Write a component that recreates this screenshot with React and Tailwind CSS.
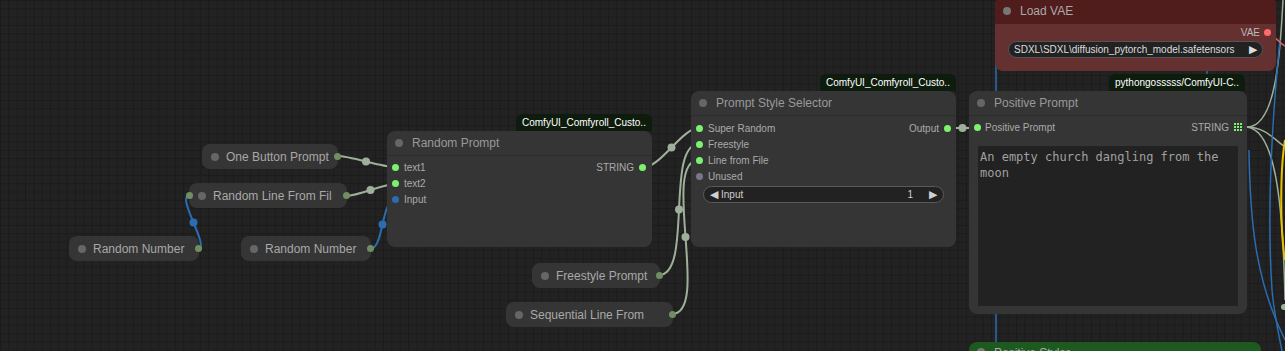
import React from "react";

const WIRE = "#9fb09a";
const BLUE = "#2a6db0";

function Dot({ className }) {
  return <span className={"inline-block rounded-full shrink-0 " + className} />;
}

function Collapsed({ className, label, inDot }) {
  return (
    <div className={"absolute h-[25px] rounded-lg bg-[#353535] flex items-center " + className}>
      {inDot && <Dot className="absolute left-[-3px] w-[7px] h-[7px] bg-[#6f8f63]" />}
      <Dot className="ml-[9px] w-[8px] h-[8px] bg-[#666]" />
      <span className="ml-[7px] text-[12px] text-[#a8a8a8] whitespace-nowrap">{label}</span>
      <Dot className="absolute right-[-3px] w-[7px] h-[7px] bg-[#6f8f63]" />
    </div>
  );
}

function Badge({ className, children }) {
  return (
    <div className={"absolute h-[17px] rounded-t-md bg-[#0e1c0e] text-white text-[10px] leading-[17px] px-[6px] whitespace-nowrap " + className}>
      {children}
    </div>
  );
}

function Title({ children }) {
  return (
    <div className="h-[25px] flex items-center border-b border-[#2c2c2c]">
      <Dot className="ml-[8px] w-[8px] h-[8px] bg-[#666]" />
      <span className="ml-[9px] text-[12px] text-[#999]">{children}</span>
    </div>
  );
}

function Slot({ label, color, right, rightDot }) {
  return (
    <div className="h-4 flex items-center text-[10px] text-[#aaa]">
      {label ? (
        <>
          <Dot className={"ml-[5px] w-[7px] h-[7px] " + color} />
          <span className="ml-[5px]">{label}</span>
        </>
      ) : null}
      {right && (
        <span className="ml-auto flex items-center">
          <span>{right}</span>
          <Dot className={"ml-[5px] mr-[5px] w-[7px] h-[7px] " + rightDot} />
        </span>
      )}
    </div>
  );
}

export default function App() {
  return (
    <div
      className="relative w-[1285px] h-[351px] overflow-hidden bg-[#222222] bg-[linear-gradient(to_right,#1b1b1b_1px,transparent_1px),linear-gradient(to_bottom,#1b1b1b_1px,transparent_1px)] bg-[size:8.33px_8.33px]"
      style={{ fontFamily: '"Liberation Sans", Arial, sans-serif' }}
    >
      <svg className="absolute inset-0" width="1285" height="351" fill="none">
        <path d="M996 60 L996 351" stroke={BLUE} strokeWidth="1.5" />
        <path d="M1207 60 L1207 100" stroke={BLUE} strokeWidth="1.5" />
        <path d="M337 156 C352 156 380 167 395 167" stroke={WIRE} strokeWidth="2" />
        <path d="M346 196 C359 196 383 184 395 184" stroke={WIRE} strokeWidth="2" />
        <path d="M198 249 C211 249 176 196 189 196" stroke={BLUE} strokeWidth="2" />
        <path d="M370 249 C384 249 381 200 395 200" stroke={BLUE} strokeWidth="2" />
        <path d="M644 167 C661 167 682 128 699 128" stroke={WIRE} strokeWidth="2" />
        <path d="M659 275 C693 275 665 144 699 144" stroke={WIRE} strokeWidth="2" />
        <path d="M672 314 C711 314 660 160 699 160" stroke={WIRE} strokeWidth="2" />
        <path d="M948 128 L977 128" stroke={WIRE} strokeWidth="2" />
        <path d="M1247 127 C1275 127 1280 60 1283 0" stroke={WIRE} strokeWidth="1.5" />
        <path d="M1247 127 C1265 127 1275 140 1285 147" stroke={WIRE} strokeWidth="1.5" />
        <path d="M1247 127 C1275 130 1283 200 1285 300" stroke={WIRE} strokeWidth="1.5" />
        <path d="M1280 40 C1274 100 1266 200 1272 290 C1275 320 1280 340 1282 351" stroke={BLUE} strokeWidth="1.5" />
        <path d="M1249 150 C1250 220 1255 280 1285 340" stroke={BLUE} strokeWidth="1.5" />
        <path d="M1285 140 C1280 170 1280 230 1285 260" stroke="#e8c000" strokeWidth="2" />
        <path d="M1268 35 C1275 35 1278 42 1285 46" stroke="#e06060" strokeWidth="1.5" />
        <circle cx="366" cy="161.5" r="4" fill={WIRE} />
        <circle cx="370.5" cy="190" r="4" fill={WIRE} />
        <circle cx="193.5" cy="222.5" r="4" fill={BLUE} />
        <circle cx="382.5" cy="224.5" r="4" fill={BLUE} />
        <circle cx="671.5" cy="147.5" r="4" fill={WIRE} />
        <circle cx="679" cy="209.5" r="4" fill={WIRE} />
        <circle cx="685.5" cy="237" r="4" fill={WIRE} />
        <circle cx="962.5" cy="128" r="4" fill={WIRE} />
        <circle cx="1284" cy="307" r="3" fill={WIRE} />
      </svg>

      <Collapsed className="left-[202px] top-[144px] w-[136px]" label="One Button Prompt" />
      <Collapsed className="left-[189px] top-[183px] w-[158px]" label="Random Line From Fil" inDot />
      <Collapsed className="left-[69px] top-[236px] w-[130px]" label="Random Number" />
      <Collapsed className="left-[241px] top-[236px] w-[130px]" label="Random Number" />
      <Collapsed className="left-[532px] top-[263px] w-[128px]" label="Freestyle Prompt" />
      <Collapsed className="left-[506px] top-[302px] w-[167px]" label="Sequential Line From" />

      <Badge className="left-[516px] top-[114px]">ComfyUI_Comfyroll_Custo..</Badge>
      <div className="absolute left-[387px] top-[131px] w-[265px] h-[116px] rounded-lg bg-[#353535]">
        <Title>Random Prompt</Title>
        <div className="pt-[3px] pr-[1px]">
          <Slot label="text1" color="bg-[#7cf26e]" right="STRING" rightDot="bg-[#7cf26e]" />
          <Slot label="text2" color="bg-[#7cf26e]" />
          <Slot label="Input" color="bg-[#2a6db0]" />
        </div>
      </div>

      <Badge className="left-[820px] top-[74px]">ComfyUI_Comfyroll_Custo..</Badge>
      <div className="absolute left-[691px] top-[91px] w-[265px] h-[156px] rounded-lg bg-[#353535]">
        <Title>Prompt Style Selector</Title>
        <div className="pt-[4px]">
          <Slot label="Super Random" color="bg-[#7cf26e]" right="Output" rightDot="bg-[#7cf26e]" />
          <Slot label="Freestyle" color="bg-[#7cf26e]" />
          <Slot label="Line from File" color="bg-[#7cf26e]" />
          <Slot label="Unused" color="bg-[#77778a]" />
          <div className="mt-[2px] mx-[12px] h-[17px] rounded-full bg-[#222] border border-[#5a5a5a] flex items-center text-[10px] text-[#d0d0d0] px-[6px]">
            <span className="text-[11px] leading-none">◀</span>
            <span className="ml-[3px]">Input</span>
            <span className="ml-auto mr-[16px]">1</span>
            <span className="text-[11px] leading-none">▶</span>
          </div>
        </div>
      </div>

      <div className="absolute left-[995px] top-[-3px] w-[281px] h-[74px] rounded-lg bg-[#653030] overflow-hidden">
        <div className="h-[27px] flex items-center bg-[#501c1c]">
          <Dot className="ml-[8px] w-[8px] h-[8px] bg-[#777]" />
          <span className="ml-[9px] text-[12px] text-[#aaa]">Load VAE</span>
        </div>
        <div className="h-4 flex items-center justify-end text-[10px] text-[#bbb]">
          <span>VAE</span>
          <Dot className="ml-[4px] mr-[5px] w-[7px] h-[7px] bg-[#ff6b6b]" />
        </div>
        <div className="mt-[1px] mx-[13px] h-[17px] rounded-full bg-[#222] border border-[#555] flex items-center text-[10px] text-[#ddd] px-[5px]">
          <span className="whitespace-nowrap">SDXL\SDXL\diffusion_pytorch_model.safetensors</span>
          <span className="ml-auto text-[11px] leading-none">▶</span>
        </div>
      </div>

      <Badge className="left-[1109px] top-[74px]">pythongosssss/ComfyUI-C..</Badge>
      <div className="absolute left-[969px] top-[91px] w-[278px] h-[223px] rounded-lg bg-[#353535] flex flex-col">
        <Title>Positive Prompt</Title>
        <div className="h-[22px] flex items-center text-[10px] text-[#aaa]">
          <Dot className="ml-[5px] w-[7px] h-[7px] bg-[#7cf26e]" />
          <span className="ml-[4px]">Positive Prompt</span>
          <span className="ml-auto">STRING</span>
          <span className="ml-[5px] mr-[5px] grid grid-cols-3 gap-[1px]">
            {[0, 1, 2, 3, 4, 5, 6, 7, 8].map((i) => (
              <span key={i} className="w-[2px] h-[2px] bg-[#7cf26e]" />
            ))}
          </span>
        </div>
        <div
          className="mt-[8px] mx-[9px] h-[160px] bg-[#222] px-[2px] pt-[3px] text-[12px] leading-[16px] text-[#a0a0a0]"
          style={{ fontFamily: '"DejaVu Sans Mono", monospace' }}
        >
          An empty church dangling from the moon
        </div>
      </div>

      <div className="absolute left-[969px] top-[342px] w-[292px] h-[40px] rounded-lg bg-[#1e5a1f] flex items-start">
        <Dot className="mt-[6px] ml-[8px] w-[8px] h-[8px] bg-[#777]" />
        <span className="ml-[9px] mt-[2px] text-[12px] text-[#aaa]">Positive Styler</span>
      </div>
    </div>
  );
}
